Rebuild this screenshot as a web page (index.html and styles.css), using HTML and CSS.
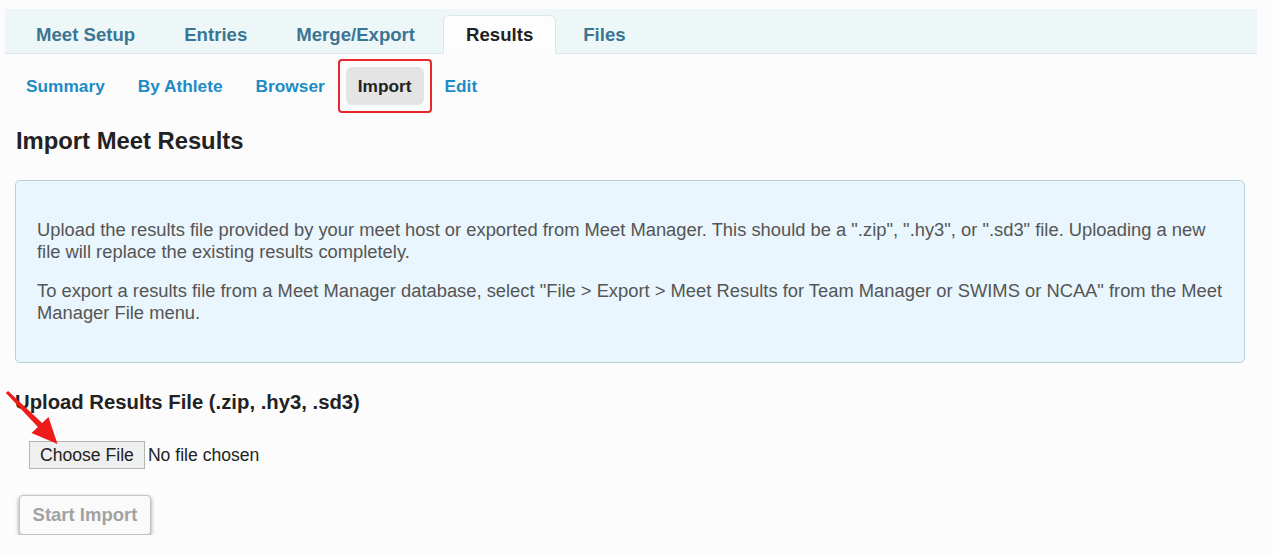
FILE: index.html
```html
<!DOCTYPE html>
<html lang="en">
<head>
    <meta charset="UTF-8">
    <meta name="viewport" content="width=device-width, initial-scale=1.0">
    <title>Import Meet Results</title>
    <link rel="stylesheet" href="styles.css">
</head>
<body>
    <div class="tabs">
        <a class="tab" href="#setup">Meet Setup</a>
        <a class="tab" href="#entries">Entries</a>
        <a class="tab" href="#merge">Merge/Export</a>
        <a class="tab active" href="#results">Results</a>
        <a class="tab" href="#files">Files</a>
    </div>

    <div class="content">
        <div class="subnav">
            <a class="pill" href="#summary">Summary</a>
            <a class="pill" href="#athlete">By Athlete</a>
            <a class="pill" href="#browser">Browser</a>
            <span class="marked"><a class="pill active" href="#import">Import</a></span>
            <a class="pill" href="#edit">Edit</a>
        </div>

        <h2>Import Meet Results</h2>

        <div class="info">
            <p>Upload the results file provided by your meet host or exported from Meet Manager. This should be a ".zip", ".hy3", or ".sd3" file. Uploading a new file will replace the existing results completely.</p>
            <p>To export a results file from a Meet Manager database, select "File &gt; Export &gt; Meet Results for Team Manager or SWIMS or NCAA" from the Meet Manager File menu.</p>
        </div>

        <h3>Upload Results File (.zip, .hy3, .sd3)</h3>

        <div class="file-row">
            <input class="file-input" type="file" name="results" accept=".zip,.hy3,.sd3">
        </div>

        <button class="btn-start" disabled>Start Import</button>
    </div>

    <!-- annotation arrow pointing at the file button -->
    <svg class="arrow" width="70" height="65" viewBox="0 0 70 65">
        <polygon points="8.1,5.9 42.1,37.9 48.5,32 57.5,59 31.5,48 37.9,42.1 5.9,8.1" fill="#ee1b1b"/>
    </svg>
</body>
</html>
```

FILE: styles.css
```css
body {
    margin: 0;
    font-family: "Liberation Sans", Arial, sans-serif;
    background-color: #fcfcfc;
    color: #222;
}

a {
    text-decoration: none;
}

/* top tab bar */
.tabs {
    display: flex;
    align-items: flex-end;
    gap: 5px;
    height: 44px;
    margin: 9px 16px 0 5px;
    padding-left: 9px;
    background-color: #eef7f7;
    border-bottom: 1px solid #dce7ec;
}

.tab {
    display: flex;
    align-items: center;
    height: 37px;
    padding: 0 22px;
    font-size: 18.6px;
    font-weight: bold;
    color: #3b7594;
}

.tab.active {
    height: 38px;
    margin-bottom: -1px;
    margin-left: 1px;
    padding: 0 22px;
    background-color: #fdfdfd;
    border: 1px solid #dce7ec;
    border-bottom: none;
    border-radius: 6px 6px 0 0;
    color: #222;
}

.content {
    padding: 0 28px 0 15px;
}

/* sub navigation */
.subnav {
    display: flex;
    align-items: center;
    gap: 9px;
    margin-top: 13px;
    margin-left: -1px;
}

.pill {
    display: block;
    padding: 9px 12px;
    line-height: 20px;
    font-size: 17.3px;
    font-weight: bold;
    color: #1d8bc5;
    border-radius: 6px;
}

.pill.active {
    background-color: #e4e4e4;
    color: #222;
}

.marked {
    margin: -8px;
    padding: 6px;
    border: 2px solid #e8262b;
    border-radius: 4px;
}

h2 {
    margin: 22px 0 26px 1px;
    font-size: 23.8px;
    line-height: 27px;
    color: #222;
}

.info {
    padding: 38px 18px 38px 21px;
    background-color: #e9f6fd;
    border: 1px solid #b9cfdc;
    border-radius: 5px;
    color: #555;
    font-size: 18.35px;
    line-height: 22px;
}

.info p {
    margin: 0 0 17px;
}

.info p:last-child {
    margin-bottom: 0;
}

h3 {
    margin: 28px 0 0;
    font-size: 20.3px;
    line-height: 23px;
    color: #222;
}

.file-row {
    margin: 27px 0 0 14px;
}

.file-input {
    font-family: "Liberation Sans", Arial, sans-serif;
    font-size: 17.6px;
    color: #222;
}

.file-input::file-selector-button {
    margin-right: 3px;
    padding: 3px 10px;
    font: inherit;
    line-height: 20px;
    color: #222;
    background-color: #efefef;
    border: 1px solid #b4b4b4;
    border-radius: 0;
}

.btn-start {
    display: block;
    margin: 26px 0 0 4px;
    width: 132px;
    height: 40px;
    padding: 0;
    font-family: "Liberation Sans", Arial, sans-serif;
    font-size: 18.5px;
    font-weight: bold;
    color: #a2a2a2;
    background-color: #fafafa;
    border: 1px solid #c4c4c4;
    border-radius: 4px;
    box-shadow: 0 2px 4px rgba(0, 0, 0, 0.4);
}

.arrow {
    position: absolute;
    left: 0;
    top: 385px;
}
```
